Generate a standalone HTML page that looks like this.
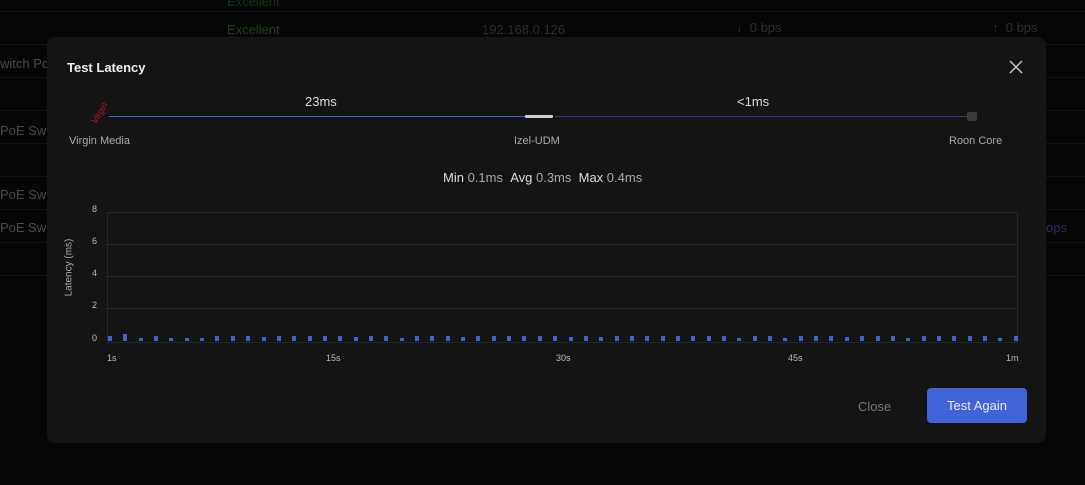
<!DOCTYPE html>
<html><head><meta charset="utf-8"><style>
body{margin:0;width:1085px;height:485px;background:#060606;font-family:"Liberation Sans",sans-serif;position:relative;overflow:hidden;color:#ddd}
.t{position:absolute;font-size:13px;color:#2e2e2e;white-space:nowrap}
.hl{position:absolute;left:0;width:1085px;height:1px;background:#141414}
.modal{position:absolute;left:47px;top:37px;width:999px;height:406px;background:#141414;border-radius:8px}
.m{position:absolute;white-space:nowrap}
.g{position:absolute;left:107px;width:910px;height:1px;background:#2a2a2a}
.yl{position:absolute;left:92px;font-size:9px;color:#bbb}
.xl{position:absolute;top:353px;font-size:9px;color:#bbb}
.bar{position:absolute;width:4px;background:#3f63d6}
</style></head><body>
<div class="hl" style="top:11px"></div><div class="hl" style="top:44px"></div><div class="hl" style="top:77px"></div><div class="hl" style="top:110px"></div><div class="hl" style="top:143px"></div><div class="hl" style="top:176px"></div><div class="hl" style="top:209px"></div><div class="hl" style="top:242px"></div><div class="hl" style="top:275px"></div>
<div class="t" style="left:227px;top:-6px;color:#1a3318">Excellent</div>
<div class="t" style="left:227px;top:22px;color:#233f1d">Excellent</div>
<div class="t" style="left:482px;top:22px">192.168.0.126</div>
<div class="t" style="left:736px;top:20px">↓ &nbsp;0 bps</div>
<div class="t" style="left:992px;top:20px">↑ &nbsp;0 bps</div>
<div class="t" style="left:0;top:56px;color:#4a4a4a">witch Po</div>
<div class="t" style="left:0;top:123px;color:#4a4a4a">PoE Sw</div>
<div class="t" style="left:0;top:187px;color:#4a4a4a">PoE Sw</div>
<div class="t" style="left:0;top:220px;color:#4a4a4a">PoE Sw</div>
<div class="t" style="left:1046px;top:220px;color:#27325e">ops</div>
<div class="modal">
<div class="m" style="left:20px;top:23px;font-size:13px;font-weight:bold;color:#eee">Test Latency</div>
<svg class="m" style="left:962px;top:23px" width="14" height="14"><path d="M1 1L13 13M13 1L1 13" stroke="#ccc" stroke-width="1.4"/></svg>
<div class="m" style="left:258px;top:57px;font-size:13px;color:#ddd">23ms</div>
<div class="m" style="left:690px;top:57px;font-size:13px;color:#ddd">&lt;1ms</div>
<div class="m" style="left:62px;top:79px;width:419px;height:1px;background:#3f63d6"></div>
<div class="m" style="left:508px;top:79px;width:418px;height:1px;background:#2b3f8a"></div>
<div class="m" style="left:41px;top:71px;font-size:9px;color:#c8102e;font-style:italic;transform:rotate(-60deg)">Virgin</div>
<div class="m" style="left:478px;top:78px;width:28px;height:3px;background:#ccc;border-radius:1px"></div>
<div class="m" style="left:920px;top:75px;width:10px;height:9px;background:#3a3a3a;border-radius:2px"></div>
<div class="m" style="left:22px;top:98px;font-size:11px;color:#aaa">Virgin Media</div>
<div class="m" style="left:467px;top:98px;font-size:11px;color:#aaa">Izel-UDM</div>
<div class="m" style="left:902px;top:98px;font-size:11px;color:#aaa">Roon Core</div>
<div class="m" style="left:396px;top:133px;font-size:13px;color:#ddd">Min <span style="color:#aaa">0.1ms</span> &nbsp;Avg <span style="color:#aaa">0.3ms</span> &nbsp;Max <span style="color:#aaa">0.4ms</span></div>
<div class="m" style="left:811px;top:362px;font-size:13px;color:#777">Close</div>
<div class="m" style="left:880px;top:351px;width:100px;height:35px;background:#4064d8;border-radius:4px;color:#eef;font-size:13px;line-height:35px;text-align:center">Test Again</div>
</div>
<div class="m" style="left:107px;top:212px;width:909px;height:129px;border:1px solid #262626"></div>
<div class="g" style="top:244px"></div><div class="g" style="top:276px"></div><div class="g" style="top:308px"></div>
<div class="yl" style="top:204px">8</div><div class="yl" style="top:236px">6</div><div class="yl" style="top:268px">4</div><div class="yl" style="top:300px">2</div><div class="yl" style="top:333px">0</div>
<div class="m" style="left:34px;top:262px;font-size:10px;color:#aaa;transform:rotate(-90deg);transform-origin:center;width:70px;text-align:center">Latency (ms)</div>
<div class="xl" style="left:107px">1s</div><div class="xl" style="left:326px">15s</div><div class="xl" style="left:556px">30s</div><div class="xl" style="left:788px">45s</div><div class="xl" style="left:1006px">1m</div>
<div id="bars"></div>
<script>
var h=[5,7,3,5,3,3,3,5,5,5,4,5,5,5,5,5,4,5,5,3,5,5,5,4,5,5,5,5,5,5,4,5,4,5,5,5,5,5,5,5,5,3,5,5,3,5,5,5,4,5,5,5,3,5,5,5,5,5,3,5];
var s='';for(var i=0;i<60;i++){s+='<div class="bar" style="left:'+(108+i*15.35)+'px;top:'+(341-h[i])+'px;height:'+h[i]+'px"></div>';}
document.getElementById('bars').innerHTML=s;
</script>
</body></html>
